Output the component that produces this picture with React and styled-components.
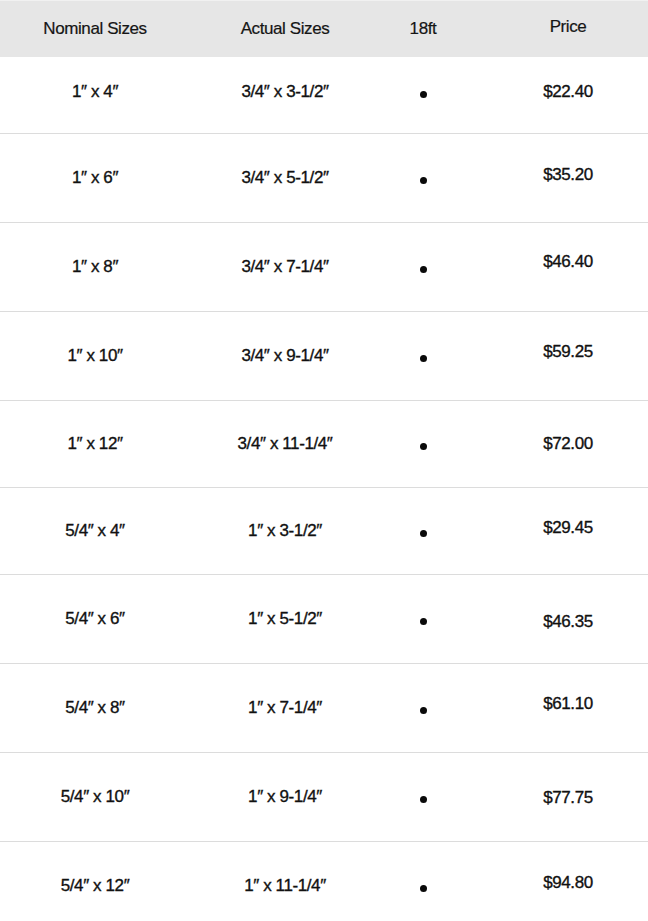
import React from "react";
import styled, { createGlobalStyle } from "styled-components";

const GlobalStyle = createGlobalStyle`
  html, body {
    margin: 0;
    padding: 0;
    background: #ffffff;
    overflow: hidden;
  }
  body {
    font-family: "Liberation Sans", Arial, sans-serif;
    color: #111111;
  }
`;

const rows = [
  { nominal: "1″ x 4″", actual: "3/4″ x 3-1/2″", price: "$22.40", height: 76, offset: 6, lift: 0 },
  { nominal: "1″ x 6″", actual: "3/4″ x 5-1/2″", price: "$35.20", height: 89, offset: 0, lift: 3 },
  { nominal: "1″ x 8″", actual: "3/4″ x 7-1/4″", price: "$46.40", height: 89, offset: 0, lift: 5 },
  { nominal: "1″ x 10″", actual: "3/4″ x 9-1/4″", price: "$59.25", height: 89, offset: 0, lift: 4 },
  { nominal: "1″ x 12″", actual: "3/4″ x 11-1/4″", price: "$72.00", height: 87, offset: 0, lift: 0 },
  { nominal: "5/4″ x 4″", actual: "1″ x 3-1/2″", price: "$29.45", height: 87, offset: 0, lift: 3 },
  { nominal: "5/4″ x 6″", actual: "1″ x 5-1/2″", price: "$46.35", height: 89, offset: 0, lift: -3 },
  { nominal: "5/4″ x 8″", actual: "1″ x 7-1/4″", price: "$61.10", height: 89, offset: 0, lift: 4 },
  { nominal: "5/4″ x 10″", actual: "1″ x 9-1/4″", price: "$77.75", height: 89, offset: 0, lift: -1 },
  { nominal: "5/4″ x 12″", actual: "1″ x 11-1/4″", price: "$94.80", height: 89, offset: 0, lift: 3 },
];

const Table = styled.div`
  width: 670px;
  display: flex;
  flex-direction: column;
`;

const HeaderRow = styled.div`
  display: grid;
  grid-template-columns: 190px 190px 86px 204px;
  height: 56px;
  background: #e6e6e6;
  border-top: 1px solid #f1f1f1;
  align-items: center;
`;

const HeadCell = styled.div`
  text-align: center;
  font-size: 17px;
  letter-spacing: -0.4px;
  color: #151515;
  -webkit-text-stroke: 0.2px #151515;
  margin-bottom: ${(p) => (p.$lift || 0) * 2}px;
`;

const Row = styled.div`
  display: grid;
  grid-template-columns: 190px 190px 86px 204px;
  box-sizing: border-box;
  height: ${(p) => p.$height}px;
  padding-bottom: ${(p) => p.$offset}px;
  border-top: ${(p) => (p.$first ? "none" : "1px solid #dcdcdc")};
  align-items: center;
`;

const Cell = styled.div`
  text-align: center;
  font-size: 17px;
  letter-spacing: -0.4px;
  color: #111111;
  -webkit-text-stroke: 0.35px #111111;
  margin-bottom: ${(p) => (p.$lift || 0) * 2}px;
`;

const DotCell = styled.div`
  display: flex;
  justify-content: center;
  align-items: center;
  margin-top: 4px;
`;

const Dot = styled.span`
  width: 7px;
  height: 7px;
  border-radius: 50%;
  background: #0a0a0a;
`;

export default function App() {
  return (
    <>
      <GlobalStyle />
      <Table>
        <HeaderRow>
          <HeadCell>Nominal Sizes</HeadCell>
          <HeadCell>Actual Sizes</HeadCell>
          <HeadCell>18ft</HeadCell>
          <HeadCell $lift={2}>Price</HeadCell>
        </HeaderRow>
        {rows.map((r, i) => (
          <Row key={r.nominal} $height={r.height} $offset={r.offset} $first={i === 0}>
            <Cell>{r.nominal}</Cell>
            <Cell>{r.actual}</Cell>
            <DotCell>
              <Dot />
            </DotCell>
            <Cell $lift={r.lift}>{r.price}</Cell>
          </Row>
        ))}
      </Table>
    </>
  );
}
